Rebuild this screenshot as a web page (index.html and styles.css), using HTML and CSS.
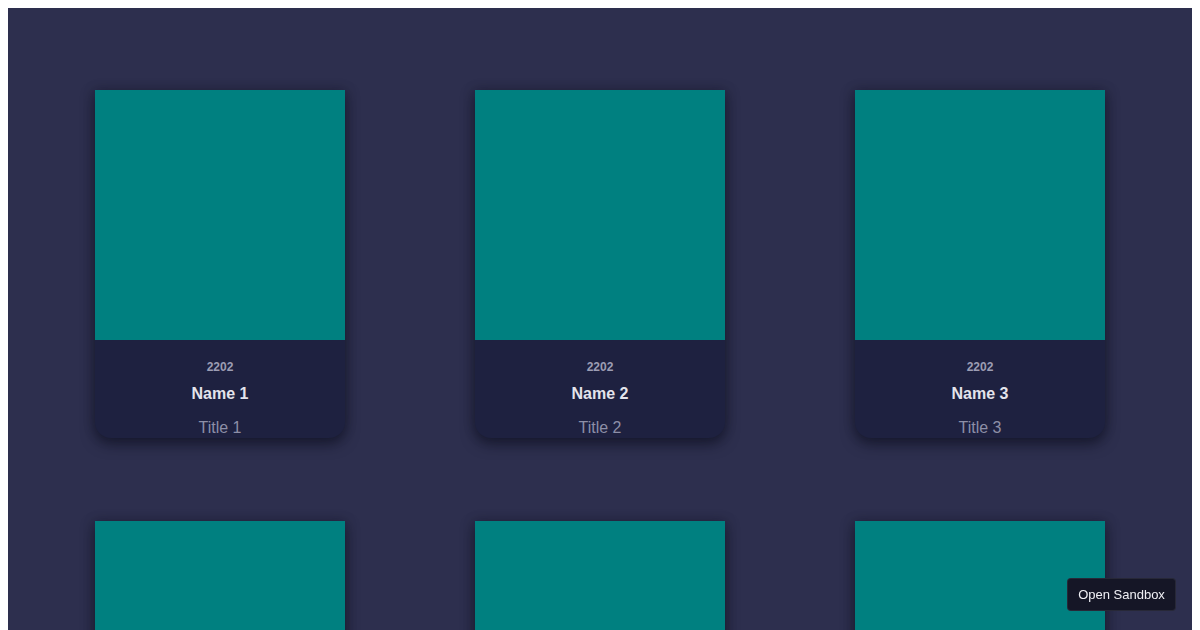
FILE: index.html
```html
<!DOCTYPE html>
<html lang="en">
<head>
<meta charset="utf-8">
<title>Cards</title>
<link rel="stylesheet" href="styles.css">
</head>
<body>
<main class="page">
  <div class="grid">
    <div class="card">
      <div class="card-image"></div>
      <div class="card-info">
        <div class="card-year">2202</div>
        <div class="card-name">Name 1</div>
        <div class="card-title">Title 1</div>
      </div>
    </div>
    <div class="card">
      <div class="card-image"></div>
      <div class="card-info">
        <div class="card-year">2202</div>
        <div class="card-name">Name 2</div>
        <div class="card-title">Title 2</div>
      </div>
    </div>
    <div class="card">
      <div class="card-image"></div>
      <div class="card-info">
        <div class="card-year">2202</div>
        <div class="card-name">Name 3</div>
        <div class="card-title">Title 3</div>
      </div>
    </div>
    <div class="card">
      <div class="card-image"></div>
      <div class="card-info">
        <div class="card-year">2202</div>
        <div class="card-name">Name 4</div>
        <div class="card-title">Title 4</div>
      </div>
    </div>
    <div class="card">
      <div class="card-image"></div>
      <div class="card-info">
        <div class="card-year">2202</div>
        <div class="card-name">Name 5</div>
        <div class="card-title">Title 5</div>
      </div>
    </div>
    <div class="card">
      <div class="card-image"></div>
      <div class="card-info">
        <div class="card-year">2202</div>
        <div class="card-name">Name 6</div>
        <div class="card-title">Title 6</div>
      </div>
    </div>
  </div>
</main>
<a class="sandbox-btn" href="#">Open Sandbox</a>
</body>
</html>
```
FILE: styles.css
```css
html {
  overflow: hidden;
}
body {
  margin: 8px;
  font-family: "Liberation Sans", Arial, sans-serif;
}
.page {
  background: #2d2f4e;
  padding: 82px 0;
}
.grid {
  display: grid;
  grid-template-columns: repeat(3, 250px);
  column-gap: 130px;
  row-gap: 83px;
  justify-content: center;
}
.card {
  width: 250px;
  height: 348px;
  overflow: hidden;
  background: #1e2140;
  border-radius: 0 0 16px 16px;
  box-shadow: 0 6px 14px rgba(10, 11, 25, 0.55), 0 0 12px rgba(10, 11, 25, 0.25);
}
.card-image {
  height: 250px;
  background: #008080;
}
.card-info {
  padding-top: 20px;
  text-align: center;
}
.card-year {
  font-size: 12px;
  line-height: 14px;
  font-weight: 700;
  color: #9c9db3;
}
.card-name {
  margin-top: 10px;
  font-size: 16px;
  line-height: 20px;
  font-weight: 700;
  color: #e4e4ec;
}
.card-title {
  margin-top: 14px;
  font-size: 16px;
  line-height: 20px;
  color: #8d8fa7;
}
.sandbox-btn {
  position: fixed;
  right: 24px;
  bottom: 19px;
  width: 109px;
  height: 33px;
  box-sizing: border-box;
  display: flex;
  align-items: center;
  justify-content: center;
  background: #151626;
  border: 1px solid rgba(255, 255, 255, 0.08);
  border-radius: 4px;
  color: #f0f0f5;
  font-family: "Liberation Sans", Arial, sans-serif;
  font-size: 13px;
  text-decoration: none;
}
```
